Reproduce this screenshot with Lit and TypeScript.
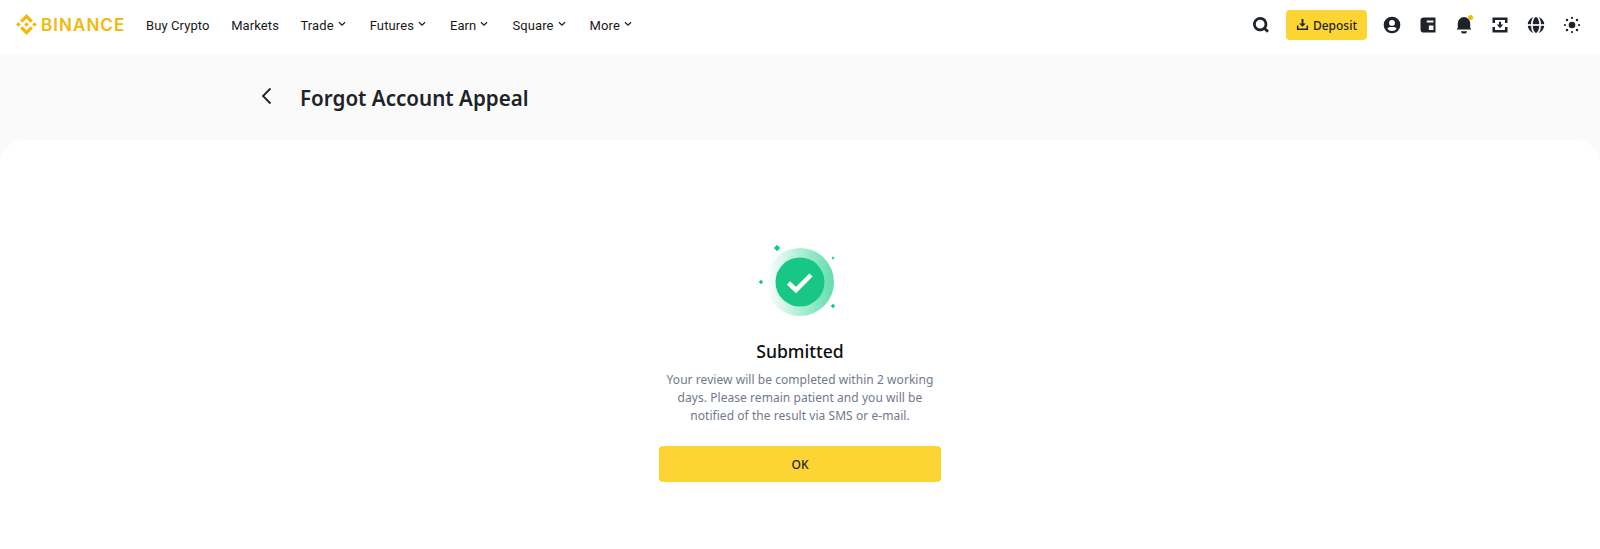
import { LitElement, html, css, svg } from "lit";
import { customElement } from "lit/decorators.js";

const chev = html`<svg class="chev" viewBox="0 0 8 6"><path d="M1 1.200 4 4.200 7 1.200" fill="none" stroke="#1e2329" stroke-width="1.300"/></svg>`;
const ic = (content: unknown) => html`<svg class="ic" viewBox="0 0 24 24" fill="#1e2329">${content}</svg>`;

@customElement("app-root")
export class AppRoot extends LitElement {
  static styles = css`
    :host { display: block; width: 1600px; height: 549px; overflow: hidden; background: #fafafa; font-family: "Noto Sans", "Open Sans", sans-serif; color: #1e2329; }
    header { height: 54px; background: #fff; display: flex; align-items: center; padding: 0 16px 5px; box-sizing: border-box; }
    .logo { display: flex; align-items: center; gap: 4px; width: 130px; flex: none; }
    .logo svg { width: 21px; height: 21px; flex: none; }
    .logo span { font-family: "Inter", sans-serif; color: #f0b90b; font-size: 17px; font-weight: 600; letter-spacing: 1.050px; line-height: 24px; }
    nav { display: flex; align-items: center; gap: 21.500px; flex: 1; margin-top: 2px; }
    nav a { display: flex; align-items: center; gap: 4px; font-family: "Roboto", sans-serif; font-size: 13px; font-weight: 400; line-height: 20px; color: #181a20; white-space: nowrap; letter-spacing: 0.100px; }
    nav a.has-menu { margin-right: 2.500px; }
    .chev { width: 8px; height: 6px; margin-bottom: 3px; }
    .right { display: flex; align-items: center; }
    .ic { width: 20px; height: 20px; flex: none; display: block; }
    .dep { display: flex; align-items: center; justify-content: center; gap: 4px; width: 81px; height: 30px; background: #fcd535; border-radius: 4px; font-size: 12px; font-weight: 500; margin: 0 15px 0 15px; }
    .dep svg { width: 13px; height: 13px; }
    .dep span { margin-top: 1px; }
    .icons { display: flex; gap: 16px; margin-right: 2px; }
    .bell { position: relative; }
    .dot { position: absolute; width: 5px; height: 5px; border-radius: 50%; background: #f0b90b; top: 0; right: 1px; }
    .top { height: 86px; box-sizing: border-box; padding: 0 0 0 255px; display: flex; align-items: center; gap: 21px; }
    .back { width: 24px; height: 24px; flex: none; margin-top: -2px; }
    h1 { margin: 2px 0 0; font-size: 20.600px; font-weight: 600; line-height: 32px; font-family: "Noto Sans", sans-serif; }
    main { background: #fff; border-radius: 24px 24px 0 0; height: 409px; display: flex; flex-direction: column; align-items: center; padding-top: 98px; box-sizing: border-box; }
    .hero { width: 88px; height: 88px; display: block; }
    h2 { margin: 12px 0 0; font-size: 17.600px; font-weight: 500; line-height: 26px; text-align: center; color: #0b0e11; }
    p { margin: 6.500px 0 0; width: 282px; font-size: 12px; line-height: 18.400px; color: #707a8a; text-align: center; letter-spacing: 0.050px; }
    button { margin-top: 20.300px; width: 282px; height: 36px; border: 0; border-radius: 4px; background: #fcd535; color: #1e2329; font: 500 12px/18px "Noto Sans", sans-serif; padding: 2px 0 0; }
  `;

  render() {
    return html`
      <header>
        <div class="logo">
          <svg viewBox="0 0 24 24" fill="#f0b90b">
            <path d="M7.400 10.100 12 5.500l4.600 4.600 2.700-2.700L12 .1 4.700 7.400zM.1 12l2.700-2.700L5.500 12l-2.700 2.700zM7.400 13.900 12 18.500l4.600-4.600 2.700 2.700L12 23.900l-7.300-7.300zM18.500 12l2.700-2.700 2.700 2.700-2.700 2.700zM14.700 12 12 9.300 9.300 12l2.700 2.700z"/>
          </svg>
          <span>BINANCE</span>
        </div>
        <nav>
          <a>Buy Crypto</a><a>Markets</a><a class="has-menu">Trade${chev}</a><a class="has-menu">Futures${chev}</a><a class="has-menu">Earn${chev}</a><a class="has-menu">Square${chev}</a><a>More${chev}</a>
        </nav>
        <div class="right">
          ${ic(svg`<path fill-rule="evenodd" d="M11 2.500a8.500 8.500 0 1 0 4.900 15.400l3.300 3.300 2.300-2.300-3.300-3.300A8.500 8.500 0 0 0 11 2.500zm0 3.200a5.300 5.300 0 1 1 0 10.600 5.300 5.300 0 0 1 0-10.600z"/>`)}
          <div class="dep">
            <svg viewBox="0 0 14 14" fill="#1e2329"><path d="M6 1h2v5h2.500L7 9.400 3.500 6H6z"/><path d="M1 8h1.600v3.200h8.800V8H13v5H1z"/></svg>
            <span>Deposit</span>
          </div>
          <div class="icons">
            ${ic(svg`<path fill-rule="evenodd" d="M12 2a10 10 0 1 0 0 20 10 10 0 0 0 0-20zm0 4a3.500 3.500 0 1 1 0 7 3.500 3.500 0 0 1 0-7zM6.300 16.500c1-1.700 3.300-2 5.700-2s4.700.3 5.700 2a7.500 7.500 0 0 1-11.400 0z"/>`)}
            ${ic(svg`<path fill-rule="evenodd" d="M7 3h14v18H7a4 4 0 0 1-4-4V7a4 4 0 0 1 4-4zm3.500 3.500v2.500h8V6.500zM13 12.500V18h5.500v-5.500z"/>`)}
            <div class="bell">
              ${ic(svg`<path d="M12 2.500a7.500 7.500 0 0 0-7.500 7.500v5.500L3 17.500h18l-1.500-2V10A7.500 7.500 0 0 0 12 2.500z"/><path d="M8.500 19.500h7a3.500 2.800 0 0 1-7 0z"/>`)}
              <div class="dot"></div>
            </div>
            ${ic(svg`<path d="M3 3h18v6.500h-3V6H6v3.500H3zM3 14.500h3V18h12v-3.500h3V21H3z"/><path d="M10.800 8h2.400v3.500H16l-4 4.500-4-4.500h2.800z"/>`)}
            ${ic(svg`<circle cx="12" cy="12" r="10"/><ellipse cx="12" cy="12" rx="5" ry="10.500" fill="none" stroke="#fff" stroke-width="2"/><path d="M1 12h22" stroke="#fff" stroke-width="2"/>`)}
            ${ic(svg`<circle cx="12" cy="12" r="4"/><circle cx="12" cy="3.500" r="1.300"/><circle cx="12" cy="20.500" r="1.300"/><circle cx="3.500" cy="12" r="1.300"/><circle cx="20.500" cy="12" r="1.300"/><circle cx="6" cy="6" r="1.500"/><circle cx="18" cy="6" r="1.500"/><circle cx="6" cy="18" r="1.500"/><circle cx="18" cy="18" r="1.500"/>`)}
          </div>
        </div>
      </header>
      <div class="top">
        <svg class="back" viewBox="0 0 24 24"><path d="M15.500 4.500 8 12l7.500 7.500" fill="none" stroke="#1e2329" stroke-width="1.800"/></svg>
        <h1>Forgot Account Appeal</h1>
      </div>
      <main>
        <svg class="hero" viewBox="0 0 88 88">
          <defs>
            <linearGradient id="ring" x1="0" y1="0.500" x2="1" y2="0.500">
              <stop offset="0" stop-color="#0ecb81" stop-opacity="0"/>
              <stop offset="0.450" stop-color="#0ecb81" stop-opacity="0.300"/>
              <stop offset="1" stop-color="#0ecb81" stop-opacity="0.650"/>
            </linearGradient>
          </defs>
          <circle cx="44" cy="44" r="34" fill="url(#ring)"/>
          <circle cx="44" cy="44" r="24.500" fill="#18c784"/>
          <path d="M32.500 45 40 52 55 37" fill="none" stroke="#fff" stroke-width="4.500"/>
          <path d="M21 6.800l3.200 3.200L21 13.200l-3.200-3.200z" fill="#0ecb81"/>
          <path d="M77 18.500l1.500 1.500-1.500 1.500-1.500-1.500z" fill="#0ecb81"/>
          <path d="M5 41.800l2.200 2.200-2.200 2.200-2.200-2.200z" fill="#0ecb81"/>
          <path d="M77 65.800l2.200 2.200-2.200 2.200-2.200-2.200z" fill="#0ecb81"/>
        </svg>
        <h2>Submitted</h2>
        <p>Your review will be completed within 2 working days. Please remain patient and you will be notified of the result via SMS or e-mail.</p>
        <button>OK</button>
      </main>
    `;
  }
}
